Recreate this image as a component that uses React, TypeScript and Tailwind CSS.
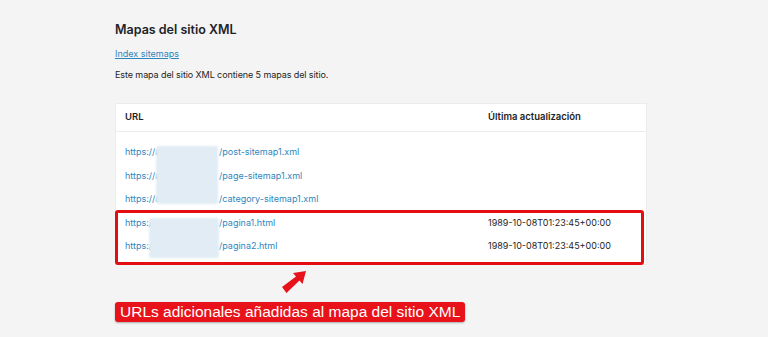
import React from "react";

const rows = [
  { path: "/post-sitemap1.xml", pre: "https://a", date: "" },
  { path: "/page-sitemap1.xml", pre: "https://a", date: "" },
  { path: "/category-sitemap1.xml", pre: "https://a", date: "" },
  { path: "/pagina1.html", pre: "https://", date: "1989-10-08T01:23:45+00:00" },
  { path: "/pagina2.html", pre: "https://", date: "1989-10-08T01:23:45+00:00" },
];

export default function App() {
  return (
    <div
      className="relative h-[337px] w-[768px] overflow-hidden bg-[#f4f4f4] text-[#1e1e1e]"
      style={{ fontFamily: "Inter, 'Noto Sans', sans-serif" }}
    >
      <div className="pl-[115px] pt-[21px]">
        <h1 className="text-[12.5px] font-semibold leading-[18px] text-[#1d2327]">Mapas del sitio XML</h1>
        <a className="mt-[9px] block text-[9px] leading-[12px] text-[#2f86bd] underline">Index sitemaps</a>
        <p className="mt-[9px] text-[9px] leading-[12px] tracking-[-0.01em]">Este mapa del sitio XML contiene 5 mapas del sitio.</p>

        <div className="relative mt-[22px] w-[532px] border border-[#ececec] bg-white">
          <div className="flex h-[28px] items-center border-b border-[#ececec] text-[9.5px] font-semibold">
            <div className="w-[372px] pl-[9px]">URL</div>
            <div>Última actualización</div>
          </div>
          <div className="pt-[8px] pb-[6px]">
            {rows.map((r, i) => (
              <div key={i} className="flex h-[23.5px] items-center text-[9px]">
                <div className="flex w-[372px] pl-[9px] text-[#2f86bd]">
                  <span className="w-[94px]">{r.pre}</span>
                  <span>{r.path}</span>
                </div>
                <div className="text-[#1e1e1e]">{r.date}</div>
              </div>
            ))}
          </div>
          {/* blurred overlays */}
          <div className="absolute left-[40px] top-[42px] h-[58px] w-[62px] rounded-[2px] bg-[#e1ecf4] blur-[1px]" />
          <div className="absolute left-[33px] top-[114px] h-[40px] w-[70px] rounded-[2px] bg-[#e1ecf4] blur-[1px]" />
          {/* red annotation box */}
          <div className="absolute bottom-[-1px] left-[-1px] right-[2px] top-[106px] rounded-[3px] border-[3px] border-[#e30d12]" />
        </div>

        <div className="mt-[37px] inline-block rounded-[3px] bg-[#e8121a] px-[5px] text-[15.5px] leading-[20px] text-white shadow-[0_1px_2px_rgba(0,0,0,0.3)]" style={{ fontFamily: "'Liberation Sans', Arial, sans-serif" }}>
          URLs adicionales añadidas al mapa del sitio XML
        </div>
      </div>

      <svg className="absolute left-[277px] top-[267px]" width="32" height="29" viewBox="0 0 32 29">
        <path d="M29 4 L16 6 L19 9.5 L5 20 L9.5 26 L22.5 13.5 L25.5 17 Z" fill="#e8121a" />
      </svg>
    </div>
  );
}
